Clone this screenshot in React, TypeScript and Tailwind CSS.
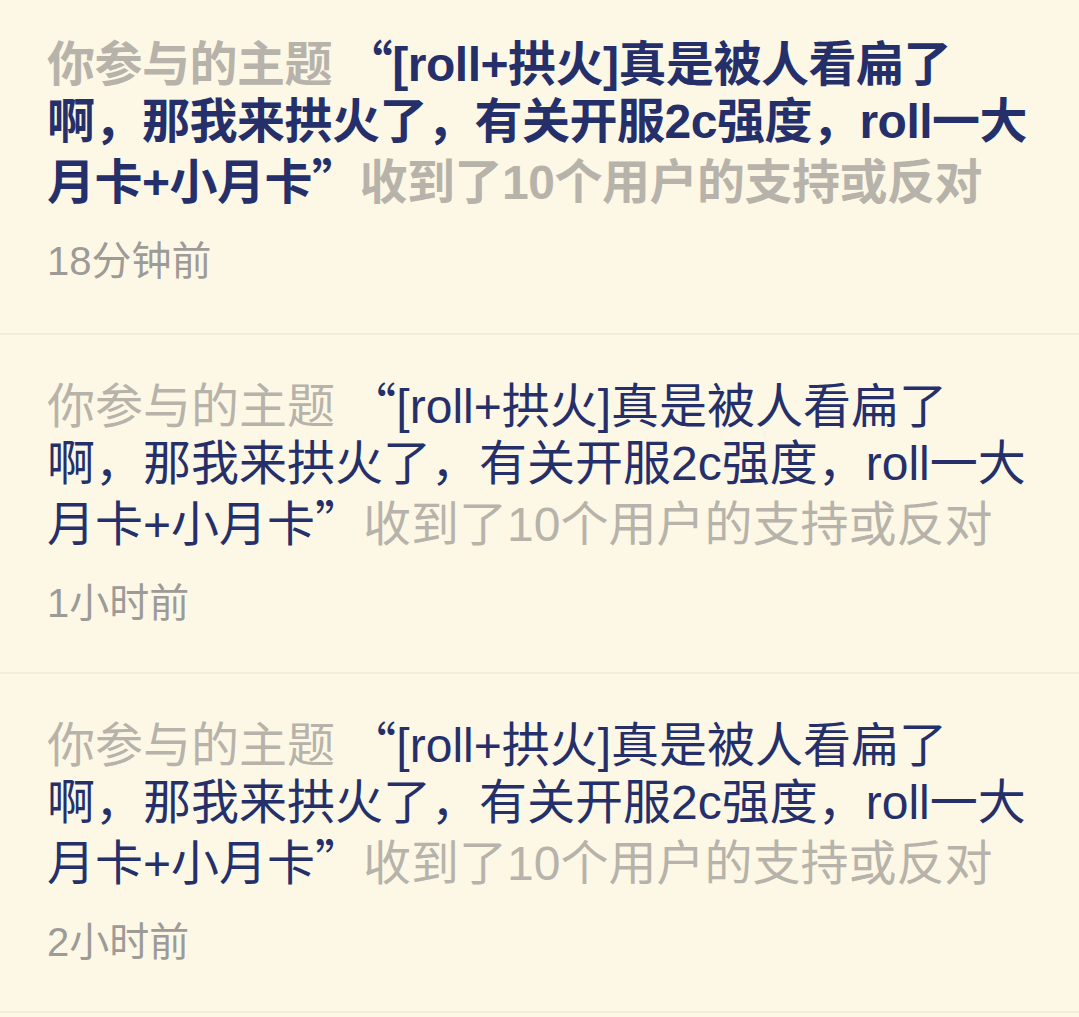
import React from "react";

const items = [
  { time: "18分钟前", unread: true },
  { time: "1小时前", unread: false },
  { time: "2小时前", unread: false },
];

const Q: React.FC<{ children: React.ReactNode }> = ({ children }) => (
  <span style={{ fontFamily: '"Noto Sans CJK SC", sans-serif' }}>{children}</span>
);

export default function App() {
  return (
    <div
      className="min-h-[1017px] w-full bg-[#fdf8e6]"
      style={{ fontFamily: '"Liberation Sans", "Noto Sans CJK SC", sans-serif' }}
    >
      {items.map((it, i) => (
        <div
          key={i}
          className={`border-b-2 border-[#f1ecdc] pl-[47px] pr-[44px] ${
            i === 0 ? "pt-[32px] pb-[48px]" : "pt-[39px] pb-[45px]"
          }`}
        >
          <p
            className={`text-[48px] leading-[57px] ${
              it.unread ? "font-bold tracking-[-0.5px]" : "font-normal"
            }`}
          >
            <span className="text-[#b7b3aa]">你参与的主题 </span>
            <span className="text-[#25306b]">
              <Q>“</Q>[roll+拱火]真是被人看扁了啊，那我来拱火了，有关开服2c强度，roll一大月卡+小月卡<Q>”</Q>
            </span>
            <span className="text-[#b7b3aa]">收到了10个用户的支持或反对</span>
          </p>
          <div className="mt-[26px] text-[40px] leading-[48px] text-[#9d9b97]">{it.time}</div>
        </div>
      ))}
    </div>
  );
}
